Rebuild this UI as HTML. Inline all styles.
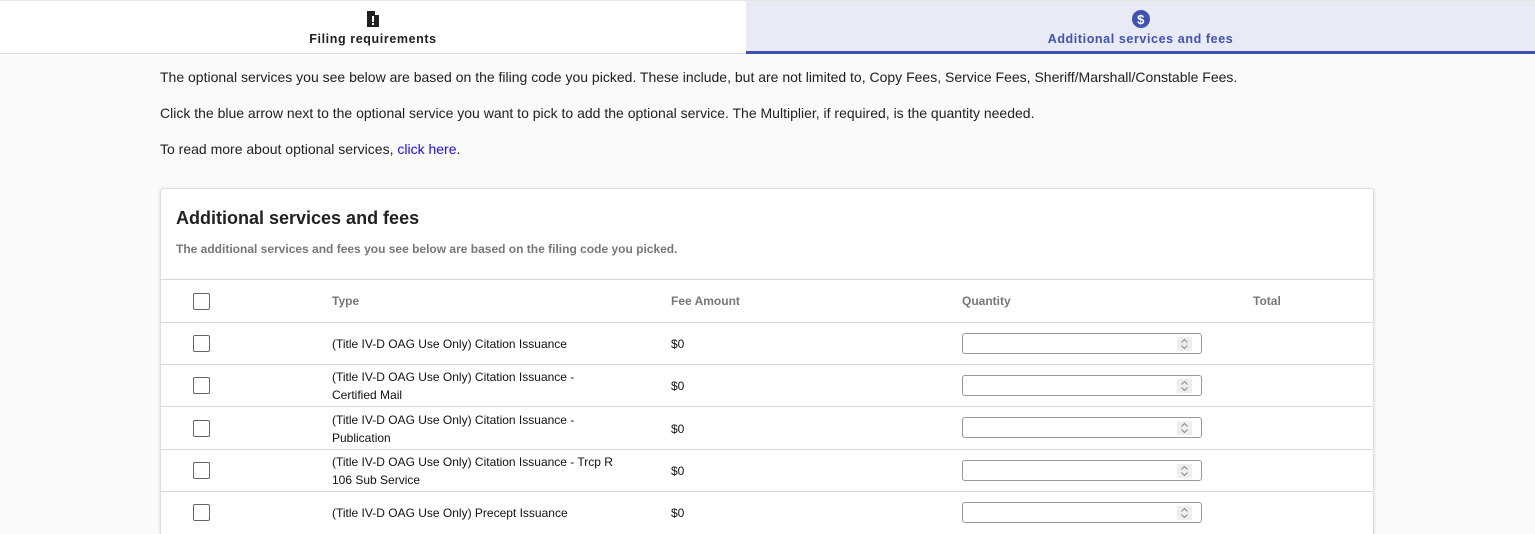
<!DOCTYPE html>
<html><head><style>
*{box-sizing:border-box;margin:0;padding:0}
html,body{width:1535px;height:534px;overflow:hidden}
body{background:#fafafa;font-family:"Liberation Sans",Roboto,sans-serif;color:#212121;position:relative}
.tab{position:absolute;top:0;height:54px;text-align:center;font-size:12.5px;font-weight:bold;letter-spacing:.6px}
.t1{left:0;width:746px;background:#fff;border-bottom:1px solid #ddd;border-top:1px solid #e4e4e4}
.t2{left:746px;width:789px;background:#e8eaf6;color:#3f51b5;border-bottom:3px solid #3f51b5;border-top:1px solid #e4e4e4}
.tab svg{position:absolute;top:9px;left:50%;margin-left:-9px}
.tab span{position:absolute;top:31px;left:0;right:0}
p.i{position:absolute;left:160px;font-size:14px;color:#212121}
a{color:#1a0dff;text-decoration:none}
.card{position:absolute;left:160px;top:188px;width:1214px;height:346px;background:#fff;border:1px solid #ddd;border-bottom:none;box-shadow:0 1px 3px rgba(0,0,0,.15);border-radius:3px 3px 0 0}
.card h2{position:absolute;left:15px;top:19px;font-size:18px;font-weight:bold;color:#212121}
.card .sub{position:absolute;left:15px;top:53px;font-size:12px;color:#777;font-weight:bold}
.line{position:absolute;left:0;right:0;height:1px;background:#d6d6d6}
.cb{position:absolute;left:32px;width:17px;height:17px;border:1.5px solid #666;border-radius:2px}
.th{position:absolute;font-size:12px;font-weight:bold;color:#777}
.td{position:absolute;font-size:12px;line-height:18px;color:#111}
.inp{position:absolute;left:801px;width:240px;height:21px;border:1px solid #999;border-radius:3px}
.inp i{position:absolute;right:9px;top:3px;width:15px;height:14px;background:#eee}
.inp i svg{position:absolute;left:3px;top:1px}
</style></head><body>
<div class="tab t1"><svg width="18" height="18" viewBox="0 0 18 18"><path d="M3 1h8l4 4v12H3z" fill="#212121"/><path d="M11 1v4h4" fill="#fff"/><rect x="8" y="6" width="2" height="6" fill="#fff"/><rect x="8" y="13" width="2" height="2" fill="#fff"/></svg><span>Filing requirements</span></div>
<div class="tab t2"><svg width="18" height="18" viewBox="0 0 18 18"><circle cx="9" cy="9" r="9" fill="#3f51b5"/><text x="9" y="14" font-size="13" font-weight="bold" fill="#fff" text-anchor="middle" font-family="Liberation Sans">$</text></svg><span>Additional services and fees</span></div>
<p class="i" style="top:69px">The optional services you see below are based on the filing code you picked. These include, but are not limited to, Copy Fees, Service Fees, Sheriff/Marshall/Constable Fees.</p>
<p class="i" style="top:105px">Click the blue arrow next to the optional service you want to pick to add the optional service. The Multiplier, if required, is the quantity needed.</p>
<p class="i" style="top:141px">To read more about optional services, <a>click here</a>.</p>
<div class="card">
<h2>Additional services and fees</h2>
<div class="sub">The additional services and fees you see below are based on the filing code you picked.</div>
<div class="line" style="top:90px"></div>
<div class="cb" style="top:104px"></div>
<div class="th" style="left:171px;top:105px">Type</div>
<div class="th" style="left:510px;top:105px">Fee Amount</div>
<div class="th" style="left:801px;top:105px">Quantity</div>
<div class="th" style="left:1092px;top:105px">Total</div>
<div class="line" style="top:133px"></div>
<div class="cb" style="top:146px"></div><div class="td" style="left:171px;top:146px">(Title IV-D OAG Use Only) Citation Issuance</div><div class="td" style="left:510px;top:146px">$0</div><div class="inp" style="top:144px"><i><svg width="9" height="12" viewBox="0 0 9 12"><path d="M1.5 4.5L4.5 1.5L7.5 4.5M1.5 7.5L4.5 10.5L7.5 7.5" fill="none" stroke="#888" stroke-width="1"/></svg></i></div>
<div class="line" style="top:175px"></div>
<div class="cb" style="top:188px"></div><div class="td" style="left:171px;top:179px">(Title IV-D OAG Use Only) Citation Issuance -<br>Certified Mail</div><div class="td" style="left:510px;top:188px">$0</div><div class="inp" style="top:186px"><i><svg width="9" height="12" viewBox="0 0 9 12"><path d="M1.5 4.5L4.5 1.5L7.5 4.5M1.5 7.5L4.5 10.5L7.5 7.5" fill="none" stroke="#888" stroke-width="1"/></svg></i></div>
<div class="line" style="top:217px"></div>
<div class="cb" style="top:231px"></div><div class="td" style="left:171px;top:222px">(Title IV-D OAG Use Only) Citation Issuance -<br>Publication</div><div class="td" style="left:510px;top:231px">$0</div><div class="inp" style="top:228px"><i><svg width="9" height="12" viewBox="0 0 9 12"><path d="M1.5 4.5L4.5 1.5L7.5 4.5M1.5 7.5L4.5 10.5L7.5 7.5" fill="none" stroke="#888" stroke-width="1"/></svg></i></div>
<div class="line" style="top:260px"></div>
<div class="cb" style="top:273px"></div><div class="td" style="left:171px;top:264px">(Title IV-D OAG Use Only) Citation Issuance - Trcp R<br>106 Sub Service</div><div class="td" style="left:510px;top:273px">$0</div><div class="inp" style="top:271px"><i><svg width="9" height="12" viewBox="0 0 9 12"><path d="M1.5 4.5L4.5 1.5L7.5 4.5M1.5 7.5L4.5 10.5L7.5 7.5" fill="none" stroke="#888" stroke-width="1"/></svg></i></div>
<div class="line" style="top:302px"></div>
<div class="cb" style="top:315px"></div><div class="td" style="left:171px;top:315px">(Title IV-D OAG Use Only) Precept Issuance</div><div class="td" style="left:510px;top:315px">$0</div><div class="inp" style="top:313px"><i><svg width="9" height="12" viewBox="0 0 9 12"><path d="M1.5 4.5L4.5 1.5L7.5 4.5M1.5 7.5L4.5 10.5L7.5 7.5" fill="none" stroke="#888" stroke-width="1"/></svg></i></div>
</div>
</body></html>
